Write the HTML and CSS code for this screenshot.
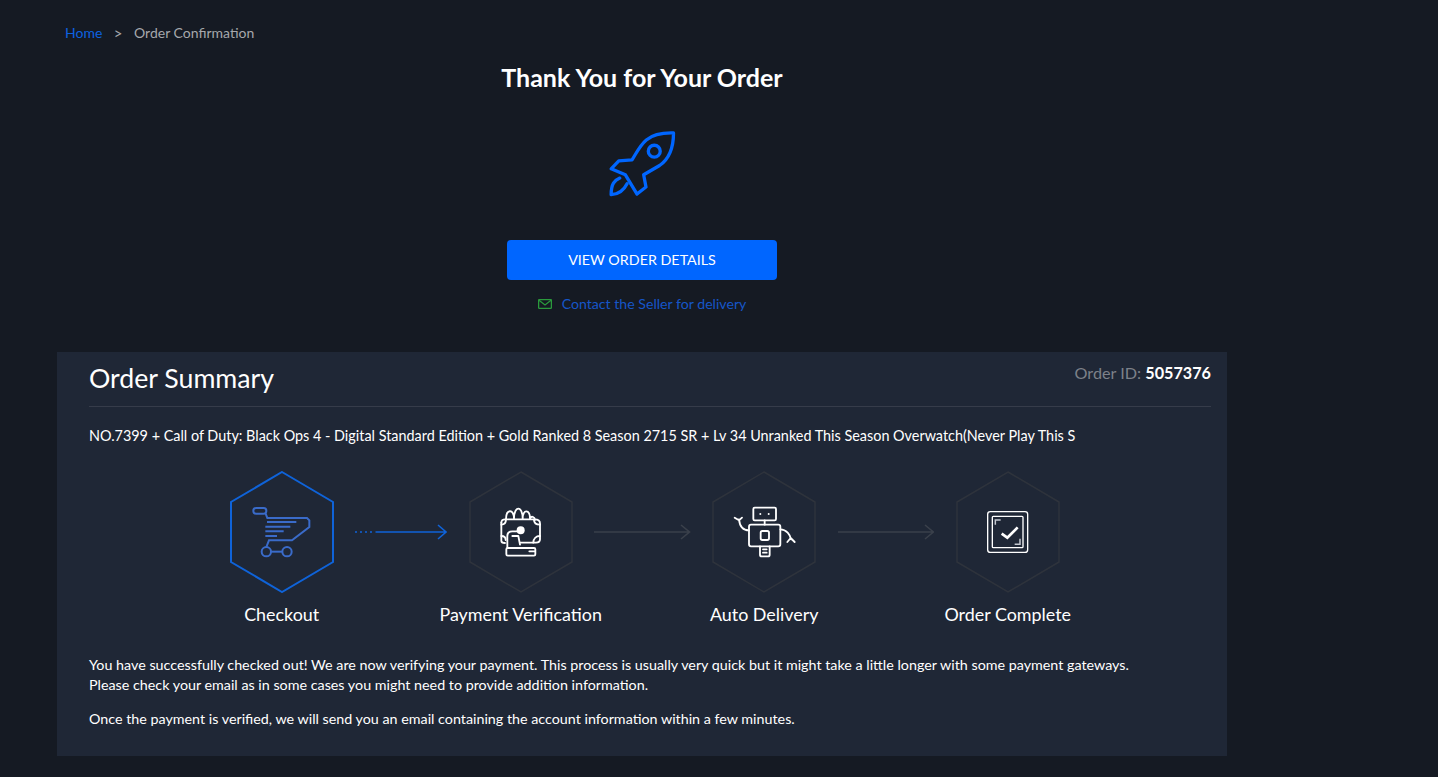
FILE: index.html
```html
<!DOCTYPE html>
<html lang="en">

<head>
    <meta charset="UTF-8">
    <meta name="viewport" content="width=device-width, initial-scale=1.0">
    <title>Order Confirmation</title>
    <link rel="stylesheet" href="styles.css">
</head>

<body class="body">
    <div class="page">

        <div class="breadcrumb">
            <a class="crumb-link" href="#">Home</a>
            <span class="crumb-sep">&gt;</span>
            <span class="crumb-current">Order Confirmation</span>
        </div>

        <div class="thanks">
            <h1 class="thanks-title">Thank You for Your Order</h1>

            <svg class="rocket" viewBox="380 210 210 205" fill="none" stroke="#0066ff" stroke-width="10" stroke-linejoin="round" stroke-linecap="round">
                <path d="M580 219 C545 218 520 222 498 240 C478 257 468 280 455 300 L415 303 L392 327 L435 345 L470 403 L497 382 L490 345 L538 317 C570 295 580 262 580 219 Z" />
                <circle cx="522" cy="274" r="18" />
                <path d="M418 355 C402 362 392 372 392 405 C412 404 430 392 440 372" />
            </svg>

            <a class="view-btn" href="#">VIEW ORDER DETAILS</a>

            <div class="contact">
                <svg class="mail-icon" viewBox="0 0 14 10" fill="none" stroke="#2a9a3c" stroke-width="1.3">
                    <rect x="0.6" y="0.6" width="12.8" height="8.8" rx="0.8" />
                    <path d="M1 1.2 L7 6 L13 1.2" />
                </svg>
                <a class="contact-link" href="#">Contact the Seller for delivery</a>
            </div>
        </div>

        <div class="summary">
            <div class="summary-head">
                <h2 class="summary-title">Order Summary</h2>
                <div class="order-id">Order ID: <b class="order-num">5057376</b></div>
            </div>

            <p class="product">NO.7399 + Call of Duty: Black Ops 4 - Digital Standard Edition + Gold Ranked 8 Season 2715 SR + Lv 34 Unranked This Season Overwatch(Never Play This S</p>

            <div class="steps">
                <!-- checkout -->
                <svg class="hex" viewBox="29 17 312 366" fill="none">
                    <path d="M185 20 L338 110 L338 290 L185 380 L32 290 L32 110 Z" stroke="#0f63d9" stroke-width="6" />
                    <g stroke="#3a6bc9" stroke-width="6">
                        <rect x="99" y="128" width="39" height="17" rx="8" />
                        <path d="M136 145 L141 158 L260 158 L267 165 L267 185 L215 225 L146 225 L138 245" />
                        <path d="M140 170 H228 M135 184 H210 M135 198 H190 M135 212 H170" />
                        <circle cx="138" cy="259" r="14" />
                        <circle cx="200" cy="259" r="14" />
                        <path d="M152 259 H186" />
                    </g>
                </svg>

                <svg class="arrow arrow-first" viewBox="0 0 92 16" fill="none" stroke="#0f63d9" stroke-width="1.6">
                    <path d="M0 8 H19" stroke-dasharray="2 3" />
                    <path d="M20.5 8 H91 M83 1 L91 8 L83 15" />
                </svg>

                <!-- payment -->
                <svg class="hex" viewBox="25 17 312 366" fill="none">
                    <path d="M181 20 L334 110 L334 290 L181 380 L28 290 L28 110 Z" stroke="#2e333c" stroke-width="4.5" />
                    <g stroke="#fff" stroke-width="5.5" stroke-linejoin="round" stroke-linecap="round">
                        <path d="M136 162 C136 130 160 130 160 160 C160 120 186 120 186 160 C186 130 208 132 208 160 C212 150 224 155 222 165" />
                        <path d="M122 172 C122 166 126 162 134 162 H222 C232 162 238 166 238 174 V222 C238 229 233 232 226 232 H178" />
                        <path d="M122 172 V226 C122 231 126 233 133 233" />
                        <path d="M122 178 C132 178 136 172 136 162 M238 178 C226 178 220 172 220 163 M238 212 C226 212 218 220 218 232 M122 212 C130 212 135 217 135 224" />
                        <path d="M140 246 V212 C140 202 146 198 155 198 H172 M155 212 H173 L178 238" />
                        <rect x="137" y="248" width="87" height="23" rx="4" />
                        <path d="M206 258 H222" />
                    </g>
                    <circle cx="180" cy="195" r="12" fill="#fff" />
                </svg>

                <svg class="arrow" viewBox="0 0 96.5 16" fill="none" stroke="#3a404b" stroke-width="1.6">
                    <path d="M0 8 H95.5 M87 1 L95.5 8 L87 15" />
                </svg>

                <!-- delivery -->
                <svg class="hex" viewBox="37 17 312 366" fill="none">
                    <path d="M193 20 L346 110 L346 290 L193 380 L40 290 L40 110 Z" stroke="#2e333c" stroke-width="4.5" />
                    <g stroke="#fff" stroke-width="5.5" stroke-linejoin="round" stroke-linecap="round">
                        <rect x="161" y="127" width="68" height="38" rx="4" />
                        <path d="M195 165 V178" />
                        <rect x="148" y="178" width="94" height="65" rx="6" />
                        <rect x="183" y="197" width="25" height="27" rx="5" />
                        <path d="M148 195 C130 195 120 182 118 162 M105 157 L118 165 L127 157" />
                        <path d="M242 192 C260 192 272 208 274 222 M263 230 L273 218 L285 230" />
                        <path d="M181 243 V268 C181 272 183 273 186 273 H205 C208 273 210 272 210 268 V243" />
                        <path d="M190 252 H201 M190 262 H201" />
                    </g>
                    <circle cx="182" cy="146" r="3" fill="#fff" />
                    <circle cx="207" cy="146" r="3" fill="#fff" />
                </svg>

                <svg class="arrow" viewBox="0 0 96.5 16" fill="none" stroke="#3a404b" stroke-width="1.6">
                    <path d="M0 8 H95.5 M87 1 L95.5 8 L87 15" />
                </svg>

                <!-- complete -->
                <svg class="hex" viewBox="46 17 312 366" fill="none">
                    <path d="M202 20 L355 110 L355 290 L202 380 L49 290 L49 110 Z" stroke="#2e333c" stroke-width="4.5" />
                    <rect x="141" y="139" width="120" height="122" rx="8" stroke="#fff" stroke-width="4" />
                    <rect x="155" y="153" width="92" height="94" rx="3" stroke="#fff" stroke-width="4" />
                    <path d="M164 178 V164 H180 M238 220 V237 H222" stroke="#c3c7cf" stroke-width="4.5" />
                    <path d="M183 205 L200 217 L231 186" stroke="#fff" stroke-width="8" />
                </svg>

                <div class="step-label">Checkout</div>
                <div class="step-label">Payment Verification</div>
                <div class="step-label">Auto Delivery</div>
                <div class="step-label">Order Complete</div>
            </div>

            <p class="note">You have successfully checked out! We are now verifying your payment. This process is usually very quick but it might take a little longer with some payment gateways.<br>Please check your email as in some cases you might need to provide addition information.</p>
            <p class="note note-last">Once the payment is verified, we will send you an email containing the account information within a few minutes.</p>
        </div>

    </div>
</body>

</html>
```

FILE: styles.css
```css
body {
    margin: 0;
    background: #151a23;
    font-family: "Lato", "Open Sans", sans-serif;
    color: #fff;
}

a {
    text-decoration: none;
}

.page {
    width: 1170px;
    margin-left: 57px;
    padding-bottom: 21px;
}

.breadcrumb {
    display: flex;
    padding: 24px 0 0 8px;
    height: 19px;
    font-size: 14px;
    line-height: 18px;
}

.crumb-link {
    color: #0d62e0;
}

.crumb-sep {
    margin: 0 11.5px;
    color: #a6a8ac;
    font-size: 15px;
}

.crumb-current {
    color: #a6a8ac;
}

.thanks {
    display: flex;
    flex-direction: column;
    align-items: center;
}

.thanks-title {
    margin: 17px 0 0;
    font-size: 25px;
    line-height: 34px;
    font-weight: 700;
}

.rocket {
    display: block;
    width: 70px;
    height: 68px;
    margin-top: 36px;
}

.view-btn {
    display: block;
    width: 270px;
    height: 40px;
    margin-top: 42px;
    border-radius: 4px;
    background: #0066ff;
    color: #fff;
    font-size: 14.3px;
    line-height: 40px;
    text-align: center;
}

.contact {
    display: flex;
    align-items: center;
    gap: 10px;
    margin-top: 15px;
    font-size: 14.15px;
    line-height: 18px;
}

.mail-icon {
    width: 14px;
    height: 10px;
}

.contact-link {
    color: #1656c8;
}

.summary {
    margin-top: 39px;
    padding: 0 16px 0 32px;
    height: 404px;
    background: #1f2736;
}

.summary-head {
    display: flex;
    justify-content: space-between;
    height: 54px;
    border-bottom: 1px solid #363c4a;
}

.summary-title {
    margin: 9px 0 0;
    font-size: 26.7px;
    line-height: 34px;
    font-weight: 400;
}

.order-id {
    margin-top: 11px;
    font-size: 16.2px;
    line-height: 20px;
    color: #7d8189;
}

.order-num {
    color: #fff;
    font-weight: 700;
}

.product {
    margin: 19px 0 0;
    font-size: 14.4px;
    line-height: 19px;
    white-space: nowrap;
}

.steps {
    display: grid;
    grid-template-columns: 104px 92px 104px 96.5px 104px 96.5px 104px;
    column-gap: 21.5px;
    align-items: center;
    margin: 26px 0 0 140.7px;
    width: 830px;
}

.hex {
    display: block;
    width: 104px;
    height: 122px;
}

.arrow {
    display: block;
    width: 100%;
    height: 16px;
}

.step-label {
    grid-row: 2;
    justify-self: center;
    margin-top: 9px;
    font-size: 17.9px;
    line-height: 24px;
    white-space: nowrap;
}

.step-label:nth-of-type(1) {
    grid-column: 1;
}

.step-label:nth-of-type(2) {
    grid-column: 3;
}

.step-label:nth-of-type(3) {
    grid-column: 5;
}

.step-label:nth-of-type(4) {
    grid-column: 7;
}

.note {
    margin: 29px 0 0;
    font-size: 14.3px;
    line-height: 20px;
}

.note-last {
    margin-top: 14px;
}
```
